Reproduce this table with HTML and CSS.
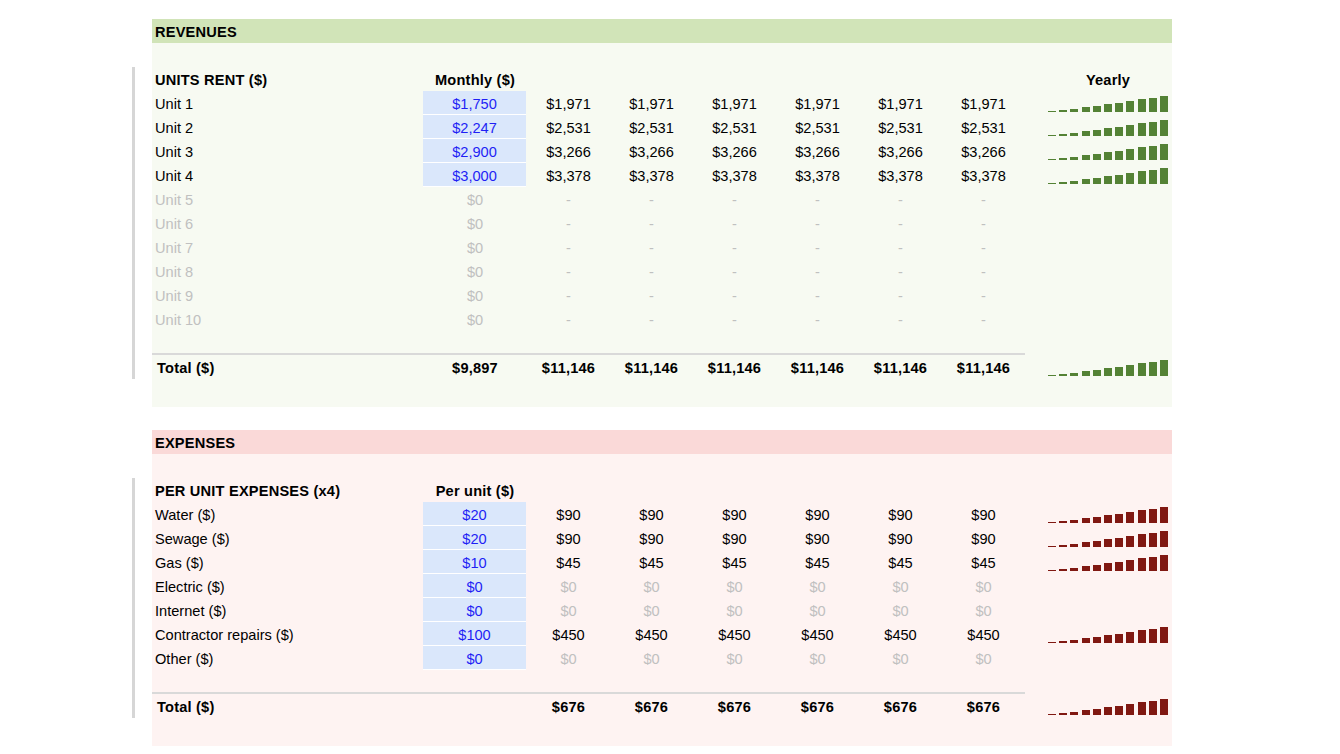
FILE: index.html
```html
<!DOCTYPE html>
<html>
<head>
<meta charset="utf-8">
<title>Rental budget</title>
<link rel="stylesheet" href="styles.css">
</head>
<body>
<div class="page">

  <section class="block rev">
    <div class="bar-head">REVENUES</div>
    <div class="rows">
      <div class="row head">
        <div class="lbl">UNITS RENT ($)</div>
        <div class="c">Monthly ($)</div>
        <div class="c"></div><div class="c"></div><div class="c"></div><div class="c"></div><div class="c"></div><div class="c"></div>
        <div></div>
        <div class="c">Yearly</div>
      </div>
      <div class="row">
        <div class="lbl">Unit 1</div>
        <div class="c"><span class="in">$1,750</span></div>
        <div class="c">$1,971</div><div class="c">$1,971</div><div class="c">$1,971</div><div class="c">$1,971</div><div class="c">$1,971</div><div class="c">$1,971</div>
        <div></div>
        <div class="spark"><i></i><i></i><i></i><i></i><i></i><i></i><i></i><i></i><i></i><i></i><i></i></div>
      </div>
      <div class="row">
        <div class="lbl">Unit 2</div>
        <div class="c"><span class="in">$2,247</span></div>
        <div class="c">$2,531</div><div class="c">$2,531</div><div class="c">$2,531</div><div class="c">$2,531</div><div class="c">$2,531</div><div class="c">$2,531</div>
        <div></div>
        <div class="spark"><i></i><i></i><i></i><i></i><i></i><i></i><i></i><i></i><i></i><i></i><i></i></div>
      </div>
      <div class="row">
        <div class="lbl">Unit 3</div>
        <div class="c"><span class="in">$2,900</span></div>
        <div class="c">$3,266</div><div class="c">$3,266</div><div class="c">$3,266</div><div class="c">$3,266</div><div class="c">$3,266</div><div class="c">$3,266</div>
        <div></div>
        <div class="spark"><i></i><i></i><i></i><i></i><i></i><i></i><i></i><i></i><i></i><i></i><i></i></div>
      </div>
      <div class="row">
        <div class="lbl">Unit 4</div>
        <div class="c"><span class="in">$3,000</span></div>
        <div class="c">$3,378</div><div class="c">$3,378</div><div class="c">$3,378</div><div class="c">$3,378</div><div class="c">$3,378</div><div class="c">$3,378</div>
        <div></div>
        <div class="spark"><i></i><i></i><i></i><i></i><i></i><i></i><i></i><i></i><i></i><i></i><i></i></div>
      </div>
      <div class="row off">
        <div class="lbl">Unit 5</div>
        <div class="c">$0</div>
        <div class="c">-</div><div class="c">-</div><div class="c">-</div><div class="c">-</div><div class="c">-</div><div class="c">-</div>
      </div>
      <div class="row off">
        <div class="lbl">Unit 6</div>
        <div class="c">$0</div>
        <div class="c">-</div><div class="c">-</div><div class="c">-</div><div class="c">-</div><div class="c">-</div><div class="c">-</div>
      </div>
      <div class="row off">
        <div class="lbl">Unit 7</div>
        <div class="c">$0</div>
        <div class="c">-</div><div class="c">-</div><div class="c">-</div><div class="c">-</div><div class="c">-</div><div class="c">-</div>
      </div>
      <div class="row off">
        <div class="lbl">Unit 8</div>
        <div class="c">$0</div>
        <div class="c">-</div><div class="c">-</div><div class="c">-</div><div class="c">-</div><div class="c">-</div><div class="c">-</div>
      </div>
      <div class="row off">
        <div class="lbl">Unit 9</div>
        <div class="c">$0</div>
        <div class="c">-</div><div class="c">-</div><div class="c">-</div><div class="c">-</div><div class="c">-</div><div class="c">-</div>
      </div>
      <div class="row off">
        <div class="lbl">Unit 10</div>
        <div class="c">$0</div>
        <div class="c">-</div><div class="c">-</div><div class="c">-</div><div class="c">-</div><div class="c">-</div><div class="c">-</div>
      </div>
      <div class="spacer"></div>
      <div class="row total">
        <div class="lbl">Total ($)</div>
        <div class="c">$9,897</div>
        <div class="c">$11,146</div><div class="c">$11,146</div><div class="c">$11,146</div><div class="c">$11,146</div><div class="c">$11,146</div><div class="c">$11,146</div>
        <div></div>
        <div class="spark"><i></i><i></i><i></i><i></i><i></i><i></i><i></i><i></i><i></i><i></i><i></i></div>
      </div>
    </div>
  </section>

  <section class="block exp">
    <div class="bar-head">EXPENSES</div>
    <div class="rows">
      <div class="row head">
        <div class="lbl">PER UNIT EXPENSES (x4)</div>
        <div class="c">Per unit ($)</div>
      </div>
      <div class="row">
        <div class="lbl">Water ($)</div>
        <div class="c"><span class="in">$20</span></div>
        <div class="c">$90</div><div class="c">$90</div><div class="c">$90</div><div class="c">$90</div><div class="c">$90</div><div class="c">$90</div>
        <div></div>
        <div class="spark"><i></i><i></i><i></i><i></i><i></i><i></i><i></i><i></i><i></i><i></i><i></i></div>
      </div>
      <div class="row">
        <div class="lbl">Sewage ($)</div>
        <div class="c"><span class="in">$20</span></div>
        <div class="c">$90</div><div class="c">$90</div><div class="c">$90</div><div class="c">$90</div><div class="c">$90</div><div class="c">$90</div>
        <div></div>
        <div class="spark"><i></i><i></i><i></i><i></i><i></i><i></i><i></i><i></i><i></i><i></i><i></i></div>
      </div>
      <div class="row">
        <div class="lbl">Gas ($)</div>
        <div class="c"><span class="in">$10</span></div>
        <div class="c">$45</div><div class="c">$45</div><div class="c">$45</div><div class="c">$45</div><div class="c">$45</div><div class="c">$45</div>
        <div></div>
        <div class="spark"><i></i><i></i><i></i><i></i><i></i><i></i><i></i><i></i><i></i><i></i><i></i></div>
      </div>
      <div class="row">
        <div class="lbl">Electric ($)</div>
        <div class="c"><span class="in">$0</span></div>
        <div class="c g">$0</div><div class="c g">$0</div><div class="c g">$0</div><div class="c g">$0</div><div class="c g">$0</div><div class="c g">$0</div>
      </div>
      <div class="row">
        <div class="lbl">Internet ($)</div>
        <div class="c"><span class="in">$0</span></div>
        <div class="c g">$0</div><div class="c g">$0</div><div class="c g">$0</div><div class="c g">$0</div><div class="c g">$0</div><div class="c g">$0</div>
      </div>
      <div class="row">
        <div class="lbl">Contractor repairs ($)</div>
        <div class="c"><span class="in">$100</span></div>
        <div class="c">$450</div><div class="c">$450</div><div class="c">$450</div><div class="c">$450</div><div class="c">$450</div><div class="c">$450</div>
        <div></div>
        <div class="spark"><i></i><i></i><i></i><i></i><i></i><i></i><i></i><i></i><i></i><i></i><i></i></div>
      </div>
      <div class="row">
        <div class="lbl">Other ($)</div>
        <div class="c"><span class="in">$0</span></div>
        <div class="c g">$0</div><div class="c g">$0</div><div class="c g">$0</div><div class="c g">$0</div><div class="c g">$0</div><div class="c g">$0</div>
      </div>
      <div class="spacer"></div>
      <div class="row total">
        <div class="lbl">Total ($)</div>
        <div class="c"></div>
        <div class="c">$676</div><div class="c">$676</div><div class="c">$676</div><div class="c">$676</div><div class="c">$676</div><div class="c">$676</div>
        <div></div>
        <div class="spark"><i></i><i></i><i></i><i></i><i></i><i></i><i></i><i></i><i></i><i></i><i></i></div>
      </div>
    </div>
  </section>

</div>
</body>
</html>
```

FILE: styles.css
```css
* { box-sizing: border-box; }

html, body {
  margin: 0;
  padding: 0;
  background: #ffffff;
}

body {
  font-family: "Liberation Sans", Arial, sans-serif;
  font-size: 14.6px;
  color: #000000;
}

.page {
  width: 1020px;
  margin-left: 152px;
  padding-top: 19px;
}

.block {
  padding-bottom: 28px;
}

.block + .block {
  margin-top: 23px;
}

.rev { background: #f7faf2; }
.exp { background: #fef3f2; }

.bar-head {
  height: 24px;
  line-height: 26px;
  padding-left: 3px;
  font-weight: bold;
  letter-spacing: 0.2px;
  margin-bottom: 24px;
}

.rev .bar-head { background: #d1e4b8; }
.exp .bar-head { background: #fad9d8; }

.rows {
  margin-left: -20px;
  padding-left: 17px;
  border-left: 3px solid #d6d6d6;
}

.row {
  display: grid;
  grid-template-columns: 271px 104px repeat(6, 83px) 23px 120px;
  height: 24px;
  line-height: 26px;
  white-space: nowrap;
}

.lbl {
  padding-left: 3px;
}

.c {
  text-align: center;
}

.head {
  font-weight: bold;
  letter-spacing: 0.2px;
}

.in {
  display: block;
  width: 103px;
  height: 24px;
  background: #dae7fb;
  border-bottom: 1px solid #ffffff;
  color: #1f1ff5;
  line-height: 26px;
}

.off {
  color: #c0c0c0;
}

.g {
  color: #c0c0c0;
}

.spacer {
  width: 873px;
  height: 24px;
  border-bottom: 2px solid #d9d9d9;
}

.total {
  font-weight: bold;
  letter-spacing: 0.2px;
}

.total .lbl {
  padding-left: 5px;
}

.spark {
  display: flex;
  justify-content: space-between;
  align-items: flex-end;
  height: 21px;
}

.spark i {
  display: block;
  width: 8px;
}

.rev .spark i { background: #548235; }
.exp .spark i { background: #801812; }

.spark i:nth-child(1) { height: 1px; }
.spark i:nth-child(2) { height: 2px; }
.spark i:nth-child(3) { height: 3px; }
.spark i:nth-child(4) { height: 5px; }
.spark i:nth-child(5) { height: 6px; }
.spark i:nth-child(6) { height: 8px; }
.spark i:nth-child(7) { height: 9px; }
.spark i:nth-child(8) { height: 11px; }
.spark i:nth-child(9) { height: 13px; }
.spark i:nth-child(10) { height: 14px; }
.spark i:nth-child(11) { height: 16px; }
```
